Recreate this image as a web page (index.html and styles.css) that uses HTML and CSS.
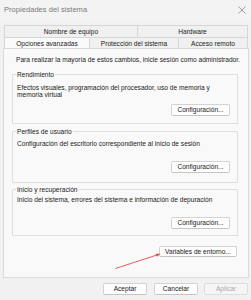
FILE: index.html
```html
<!DOCTYPE html>
<html lang="es">
<head>
<meta charset="utf-8">
<link rel="stylesheet" href="styles.css">
</head>
<body>
<div class="window">
  <div class="titlebar">
    <span class="title">Propiedades del sistema</span>
    <svg class="close" width="8" height="8" viewBox="0 0 8 8"><path d="M0.5 0.5L7.5 7.5M7.5 0.5L0.5 7.5" stroke="#8a8a8a" stroke-width="0.8" fill="none"/></svg>
  </div>
  <div class="tabs">
    <div class="tabrow back">
      <div class="tab t1">Nombre de equipo</div>
      <div class="tab t2">Hardware</div>
    </div>
    <div class="tabrow front">
      <div class="tab sel t3">Opciones avanzadas</div>
      <div class="tab t4">Protección del sistema</div>
      <div class="tab t5">Acceso remoto</div>
    </div>
  </div>
  <div class="panel">
    <p class="note">Para realizar la mayoría de estos cambios, inicie sesión como administrador.</p>
    <section class="group g1">
      <span class="legend">Rendimiento</span>
      <p class="desc">Efectos visuales, programación del procesador, uso de memoria y<br>memoria virtual</p>
      <div class="btnrow"><button class="btn cfg">Configuración...</button></div>
    </section>
    <section class="group g2">
      <span class="legend">Perfiles de usuario</span>
      <p class="desc">Configuración del escritorio correspondiente al inicio de sesión</p>
      <div class="btnrow"><button class="btn cfg">Configuración...</button></div>
    </section>
    <section class="group g3">
      <span class="legend">Inicio y recuperación</span>
      <p class="desc">Inicio del sistema, errores del sistema e información de depuración</p>
      <div class="btnrow"><button class="btn cfg">Configuración...</button></div>
    </section>
    <div class="envrow"><button class="btn env">Variables de entorno...</button></div>
  </div>
  <div class="footer">
    <button class="btn foot">Aceptar</button>
    <button class="btn foot">Cancelar</button>
    <button class="btn foot disabled">Aplicar</button>
  </div>
  <svg class="arrow" width="251" height="300" viewBox="0 0 251 300">
    <path d="M115.5 268.5L157.5 254.8" stroke="#e5484d" stroke-width="0.9" fill="none"/>
    <path d="M160.5 253.8L155.6 253.8L156.9 256.7Z" fill="#e5484d"/>
  </svg>
</div>
</body>
</html>
```
FILE: styles.css
```css
* { box-sizing: border-box; }
html, body { margin: 0; padding: 0; }
body {
  width: 251px;
  height: 300px;
  overflow: hidden;
  background: #f1f1f1;
  font-family: "Liberation Sans", Arial, sans-serif;
  font-size: 6.6px;
  color: #1a1a1a;
}
.window {
  position: relative;
  width: 251px;
  height: 300px;
  background: #f1f1f1;
}
.titlebar {
  height: 22px;
  display: flex;
  align-items: center;
  justify-content: space-between;
  padding: 0 4px 3px 4px;
  background: #f3f3f3;
}
.title {
  font-size: 7.6px;
  color: #7a7a7a;
}
.close { margin-right: 1px; }
.tabs {
  margin-top: 3px;
  padding: 0 3px 0 4px;
}
.tabrow {
  display: flex;
  height: 12px;
}
.front { height: 11px; }
.tab {
  display: flex;
  align-items: center;
  justify-content: center;
  border: 1px solid #d6d6d6;
  border-bottom: none;
  background: #f0f0f0;
  color: #1a1a1a;
  margin-left: -1px;
}
.tab:first-child { margin-left: 0; }
.t1 { width: 134px; }
.t2 { width: 111px; }
.t3 { width: 86px; }
.t4 { width: 90px; }
.t5 { width: 70px; }
.tab.sel { background: #fafafa; }
.panel {
  margin: 0 3px;
  width: 246px;
  height: 230px;
  background: #f9f9f9;
  border: 1px solid #dadada;
  padding: 7px 10px 0 8px;
}
.note {
  margin: 0 0 11px 4px;
  line-height: 7px;
  white-space: nowrap;
}
.group {
  display: flex;
  flex-direction: column;
  width: 226px;
  margin: 0;
  border: 1px solid #dedede;
  border-radius: 1px;
  padding: 0 7px 7px 3px;
}
.legend {
  align-self: flex-start;
  margin-top: -4px;
  padding: 0 1px;
  line-height: 7px;
  background: #f9f9f9;
  color: #1a1a1a;
}
.desc {
  margin: 6px 0 0 1px;
  line-height: 7px;
  white-space: nowrap;
}
.btnrow {
  display: flex;
  justify-content: flex-end;
  margin-top: 6px;
}
.g2 { margin-top: 7px; padding-bottom: 9px; }
.g2 .desc { margin-top: 5px; }
.g2 .btnrow { margin-top: 14px; }
.g3 { margin-top: 6px; padding-bottom: 6px; }
.g3 .desc { margin-top: 3px; }
.g3 .btnrow { margin-top: 14px; }
.btn {
  font-family: inherit;
  font-size: 6.6px;
  color: #1a1a1a;
  background: #fdfdfd;
  border: 1px solid #d3d3d3;
  border-bottom-color: #c4c4c4;
  border-radius: 2px;
  padding: 0;
  height: 12px;
  line-height: 10px;
}
.cfg { width: 59px; }
.envrow {
  display: flex;
  justify-content: flex-end;
  width: 225px;
  margin-top: 10px;
}
.env { width: 78px; height: 11px; line-height: 9px; }
.footer {
  display: flex;
  justify-content: flex-end;
  gap: 7px;
  padding: 5px 3px 0 0;
}
.foot { width: 44px; }
.foot + .foot.disabled { margin-left: -1px; }
.foot.disabled { color: #a8a8a8; background: #f5f5f5; border-color: #dedede; }
.arrow {
  position: absolute;
  left: 0;
  top: 0;
  pointer-events: none;
}
```
